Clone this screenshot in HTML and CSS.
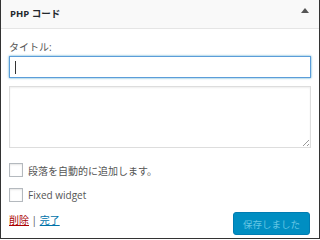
FILE: index.html
```html
<!DOCTYPE html>
<html lang="ja">
<head>
    <meta charset="UTF-8">
    <title>PHP コード</title>
    <link rel="stylesheet" href="styles.css">
</head>
<body>
    <div class="widget">
        <div class="widget-top">
            <h3>PHP コード</h3>
            <span class="toggle"></span>
        </div>
        <div class="widget-inside">
            <label class="title-label">タイトル:</label>
            <div class="text-input"><span class="caret"></span></div>
            <div class="code-area"><span class="grip"></span></div>
            <label class="check-row"><span class="box"></span>段落を自動的に追加します。</label>
            <label class="check-row"><span class="box"></span>Fixed widget</label>
            <div class="widget-control">
                <div class="links"><a class="delete">削除</a> | <a class="done">完了</a></div>
                <button class="save">保存しました</button>
            </div>
        </div>
    </div>
</body>
</html>
```

FILE: styles.css
```css
body {
    margin: 0;
    font-family: "Open Sans", "Noto Sans CJK JP", sans-serif;
    font-size: 10px;
    color: #555;
    background: #fff;
}
.widget {
    width: 318px;
    height: 238px;
    border-left: 1px solid #333;
    border-right: 1px solid #333;
    border-bottom: 1px solid #333;
    overflow: hidden;
}
.widget-top {
    height: 28px;
    background: #f9f9f9;
    border-bottom: 1px solid #e5e5e5;
    display: flex;
    align-items: center;
    justify-content: space-between;
    padding: 0 9px 0 9px;
}
.widget-top h3 {
    margin: 0 0 3px 0;
    font-size: 9.5px;
    font-weight: 700;
    color: #23282d;
}
.toggle {
    width: 0;
    height: 0;
    border-left: 4px solid transparent;
    border-right: 4px solid transparent;
    border-bottom: 5px solid #555;
    margin: 0 1px 8px 0;
}
.widget-inside {
    padding: 10px 8px 0 8px;
}
.title-label {
    display: block;
    font-size: 10px;
    line-height: 16px;
    height: 16px;
}
.text-input {
    height: 20px;
    border: 1px solid #5b9dd9;
    box-shadow: 0 0 2px rgba(30, 140, 190, .8);
    display: flex;
    align-items: center;
    padding-left: 5px;
    margin-top: 1px;
}
.caret {
    width: 1px;
    height: 13px;
    background: #333;
}
.code-area {
    height: 60px;
    margin-top: 8px;
    border: 1px solid #ddd;
    box-shadow: inset 0 1px 2px rgba(0, 0, 0, .07);
    position: relative;
}
.grip {
    position: absolute;
    right: 1px;
    bottom: 1px;
    width: 6px;
    height: 6px;
    background: linear-gradient(135deg, transparent 45%, #999 45%, #999 55%, transparent 55%, transparent 75%, #999 75%, #999 85%, transparent 85%);
}
.check-row {
    display: flex;
    align-items: center;
    height: 14px;
    margin-top: 15px;
}
.check-row + .check-row {
    margin-top: 11px;
}
.box {
    width: 12px;
    height: 12px;
    border: 1px solid #b4b9be;
    box-shadow: inset 0 1px 2px rgba(0, 0, 0, .1);
    margin-right: 5px;
    flex-shrink: 0;
}
.widget-control {
    display: flex;
    justify-content: space-between;
    align-items: flex-start;
    margin-top: 9px;
}
.links {
    margin-top: 1px;
    color: #555;
}
.delete {
    color: #a00;
    text-decoration: underline;
}
.done {
    color: #0073aa;
    text-decoration: underline;
}
.save {
    width: 77px;
    height: 23px;
    margin: 1px 1px 0 0;
    padding: 0;
    border: 1px solid #007cb2;
    border-radius: 3px;
    background: #008ec2;
    color: #66c6e4;
    font-family: inherit;
    font-size: 9.5px;
}
```
